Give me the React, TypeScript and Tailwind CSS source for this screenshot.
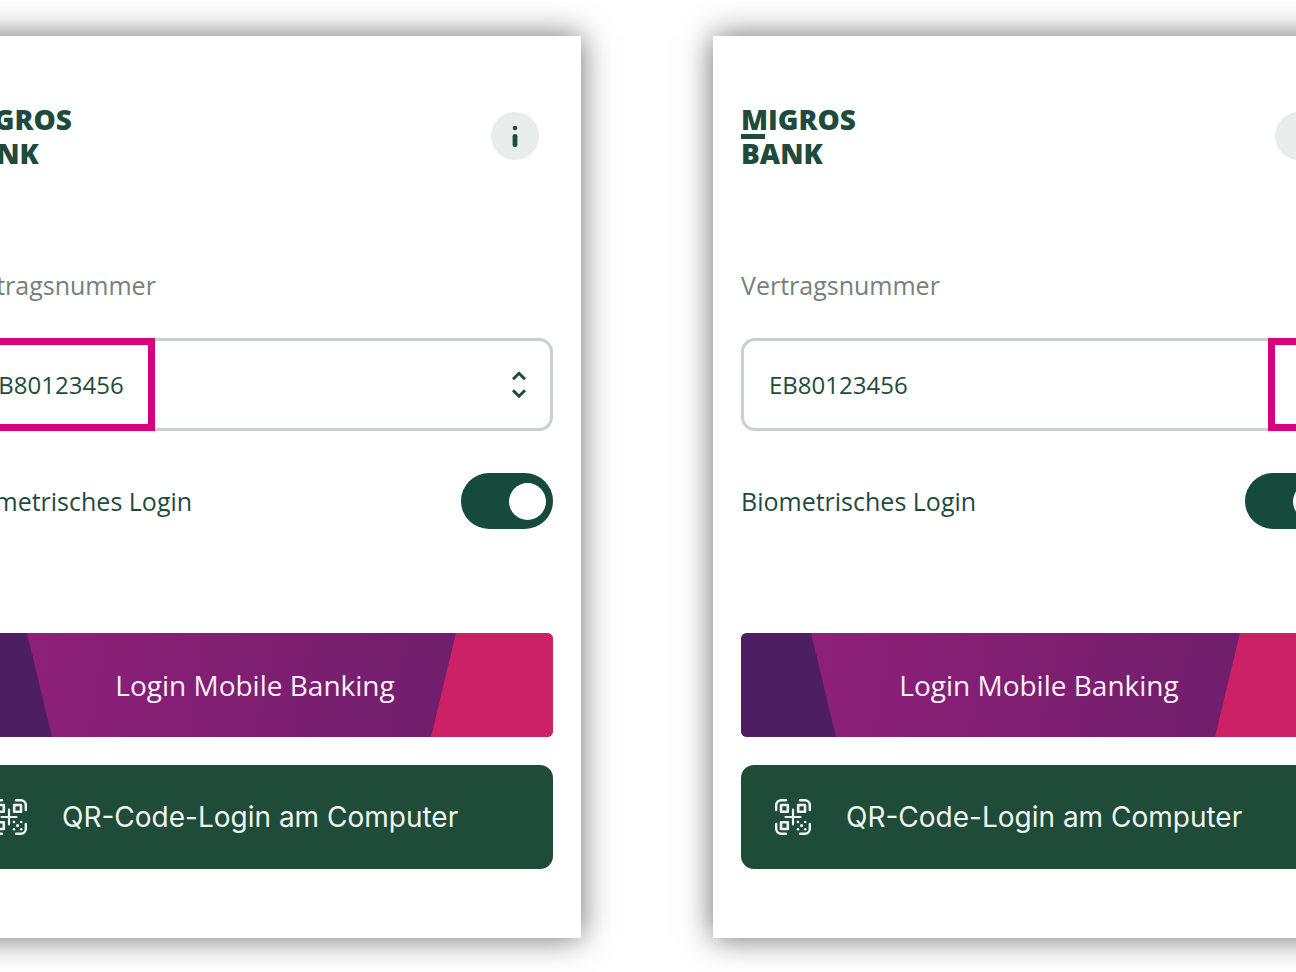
import { useId } from "react";

type Highlight = "number" | "switcher";

function Logo() {
  return (
    <div className="relative font-['Open_Sans',sans-serif] text-[28px] leading-[34px] font-extrabold text-[#1f4b3d]">
      <div>MIGROS</div>
      <div>BANK</div>
      <span className="absolute top-8 left-0 h-[5px] w-6 bg-[#1f4b3d]" />
    </div>
  );
}

function InfoIcon() {
  return (
    <svg width="48" height="48" viewBox="0 0 48 48" fill="#1f4b3d" aria-hidden="true">
      <circle cx="24" cy="16" r="2.3" />
      <rect x="21.6" y="22" width="4.8" height="13" rx="2.2" />
    </svg>
  );
}

function UpDownIcon() {
  return (
    <svg
      width="16"
      height="30"
      viewBox="0 0 16 30"
      fill="none"
      stroke="#1f4b3d"
      strokeWidth="3"
      strokeLinejoin="round"
      aria-hidden="true"
    >
      <path d="M2 9.2 8 3.2l6 6M2 20.3l6 6 6-6" />
    </svg>
  );
}

function QrIcon() {
  return (
    <svg width="36" height="36" viewBox="0 0 36 36" fill="none" stroke="#eef5f1" strokeWidth="2.4" strokeLinecap="round" aria-hidden="true">
      <path d="M1.2 11V6.2a5 5 0 0 1 5-5H11M25 1.2h4.8a5 5 0 0 1 5 5V11M34.8 25v4.8a5 5 0 0 1-5 5H25M11 34.8H6.2a5 5 0 0 1-5-5V25" />
      <path d="M18 10.5v15M10.5 18h15" strokeWidth="2.2" />
      <g strokeWidth="2.6" strokeLinecap="butt" strokeLinejoin="round">
        <rect x="6" y="6" width="6.8" height="6.8" />
        <rect x="23.2" y="6" width="6.8" height="6.8" />
        <rect x="6" y="23.2" width="6.8" height="6.8" />
      </g>
      <g fill="#eef5f1" stroke="none">
        <circle cx="23" cy="23" r="1.3" />
        <circle cx="30.2" cy="23" r="1.3" />
        <circle cx="26.6" cy="26.6" r="1.6" />
        <circle cx="23" cy="30.2" r="1.3" />
        <circle cx="30.2" cy="30.2" r="1.3" />
      </g>
    </svg>
  );
}

function LoginPanel({ highlight }: { highlight: Highlight }) {
  const id = useId();
  return (
    <section className="min-w-0 flex-1 bg-white px-7 pt-[66px] pb-[69px] shadow-[0_0_30px_rgba(0,0,0,0.58)]">
      <header className="flex items-center justify-between">
        <Logo />
        <button type="button" aria-label="Information" className="mr-3.5 size-12 rounded-full bg-[#e8eceb]">
          <InfoIcon />
        </button>
      </header>

      <label htmlFor={`${id}-contract`} className="mt-[97px] block text-[25px] leading-9 text-[#75827a]">
        Vertragsnummer
      </label>
      <div className="relative mt-[35px]">
        <select
          id={`${id}-contract`}
          className="block h-[93px] w-full appearance-none rounded-[14px] border-3 border-[#c6d2ce] bg-white px-[25px] text-2xl text-[#1f4b3d]"
        >
          <option>EB80123456</option>
        </select>
        <span className="pointer-events-none absolute inset-y-0 right-[26px] flex items-center">
          <UpDownIcon />
        </span>
        {highlight === "number" ? (
          <span className="pointer-events-none absolute inset-y-0 left-0 w-[198px] border-7 border-[#d8007f]" />
        ) : (
          <span className="pointer-events-none absolute inset-y-0 right-0 w-[69px] border-7 border-[#d8007f]" />
        )}
      </div>

      <div className="mt-[42px] flex items-center justify-between">
        <label htmlFor={`${id}-bio`} className="text-[25px] leading-9 text-[#1f4b3d]">
          Biometrisches Login
        </label>
        <input
          id={`${id}-bio`}
          type="checkbox"
          role="switch"
          defaultChecked
          className="flex h-14 w-[92px] appearance-none items-center rounded-full bg-[#b9c6c1] px-[7px] before:size-[37px] before:rounded-full before:bg-white checked:justify-end checked:bg-[#164a3d]"
        />
      </div>

      <button
        type="button"
        className="relative mt-[104px] flex h-[104px] w-full items-center justify-center overflow-hidden rounded-md bg-linear-[100deg] from-[#93207a] to-[#691e69] text-[28px] text-[#fdeffa]"
      >
        <span className="absolute inset-y-0 left-0 w-[95px] bg-[#4e1e63] [clip-path:polygon(0_0,70px_0,100%_100%,0_100%)]" />
        <span className="absolute inset-y-0 right-0 w-[122px] bg-[#cc2067] [clip-path:polygon(25px_0,100%_0,100%_100%,0_100%)]" />
        <span className="relative">Login Mobile Banking</span>
      </button>

      <button
        type="button"
        className="mt-7 flex h-[104px] w-full items-center gap-[35px] rounded-[13px] bg-[#1f4b39] px-[34px] font-['Inter',sans-serif] text-[28px] text-[#eef5f1]"
      >
        <QrIcon />
        <span className="whitespace-nowrap">QR-Code-Login am Computer</span>
      </button>
    </section>
  );
}

export default function App() {
  return (
    <div className="min-h-screen overflow-hidden bg-white pt-9 pb-8 font-['Open_Sans',sans-serif]">
      <main className="mr-[-69px] ml-[-71px] flex items-start gap-[132px]">
        <LoginPanel highlight="number" />
        <LoginPanel highlight="switcher" />
      </main>
    </div>
  );
}
